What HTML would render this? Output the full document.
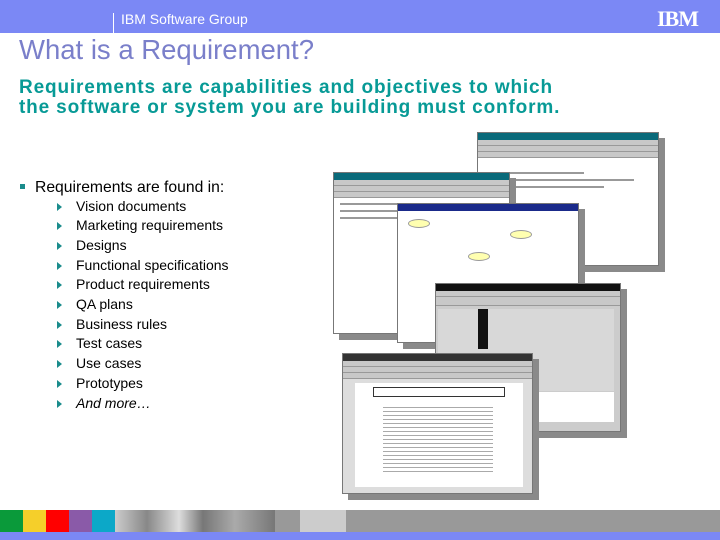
<!DOCTYPE html>
<html><head><style>
*{margin:0;padding:0;box-sizing:border-box}
body{width:720px;height:540px;position:relative;overflow:hidden;background:#fff;font-family:"Liberation Sans",sans-serif}
.a{position:absolute}
.hdr{left:0;top:0;width:720px;height:33px;background:#7b88f5}
.win{position:absolute;background:#fff;border:1px solid #777;box-shadow:6px 6px 0 #8a8a8a}
.tb{height:7px;background:#0a6a7a}
.tb.b{background:#1a2a8a}
.tb.k{background:#111}
.bar{height:6px;background:#c8c8c8;border-bottom:1px solid #999}
.li{position:absolute;left:76px;font-size:14px;color:#000}
.ar{position:absolute;left:57px;width:0;height:0;border-left:5px solid #1a8c8c;border-top:4px solid transparent;border-bottom:4px solid transparent}
.ln{height:2px;background:#999;margin:5px 6px}
</style></head><body>
<div class="a hdr"></div>
<div class="a" style="left:113px;top:13px;width:1px;height:20px;background:#fff"></div>
<div class="a" style="left:121px;top:11px;font-size:14px;color:#fff">IBM Software Group</div>
<div class="a" style="left:657px;top:6px;font-size:22px;font-weight:bold;color:#fff;letter-spacing:-1px;font-family:'Liberation Serif',serif">IBM</div>
<div class="a" style="left:19px;top:34px;font-size:27.5px;color:#7a7fca">What is a Requirement?</div>
<div class="a" style="left:19px;top:78px;font-size:19px;font-weight:bold;color:#079a96;line-height:20px;letter-spacing:0.85px">Requirements are capabilities and objectives to which<br>the software or system you are building must conform.</div>
<div class="a" style="left:20px;top:184px;width:5px;height:5px;background:#1a8c8c"></div>
<div class="a" style="left:35px;top:179px;font-size:15.7px">Requirements are found in:</div>
<div class="ar" style="top:203px"></div><div class="li" style="top:198px">Vision documents</div>
<div class="ar" style="top:222px"></div><div class="li" style="top:217px">Marketing requirements</div>
<div class="ar" style="top:242px"></div><div class="li" style="top:237px">Designs</div>
<div class="ar" style="top:262px"></div><div class="li" style="top:257px">Functional specifications</div>
<div class="ar" style="top:281px"></div><div class="li" style="top:276px">Product requirements</div>
<div class="ar" style="top:301px"></div><div class="li" style="top:296px">QA plans</div>
<div class="ar" style="top:321px"></div><div class="li" style="top:316px">Business rules</div>
<div class="ar" style="top:340px"></div><div class="li" style="top:335px">Test cases</div>
<div class="ar" style="top:360px"></div><div class="li" style="top:355px">Use cases</div>
<div class="ar" style="top:380px"></div><div class="li" style="top:375px">Prototypes</div>
<div class="ar" style="top:400px"></div><div class="li" style="top:395px;font-style:italic">And more…</div>

<div class="win" style="left:477px;top:132px;width:182px;height:134px"><div class="tb"></div><div class="bar"></div><div class="bar"></div><div class="bar"></div><div class="ln" style="margin-top:14px;width:100px"></div><div class="ln" style="width:150px"></div><div class="ln" style="width:120px"></div></div>
<div class="win" style="left:333px;top:172px;width:177px;height:162px"><div class="tb"></div><div class="bar"></div><div class="bar"></div><div class="bar"></div><div class="ln" style="width:80px"></div><div class="ln" style="width:60px"></div><div class="ln" style="width:70px"></div></div>
<div class="win" style="left:397px;top:203px;width:182px;height:140px"><div class="tb b"></div>
<div class="a" style="left:10px;top:15px;width:22px;height:9px;border-radius:50%;background:#ffffb0;border:1px solid #999"></div>
<div class="a" style="left:70px;top:48px;width:22px;height:9px;border-radius:50%;background:#ffffb0;border:1px solid #999"></div>
<div class="a" style="left:112px;top:26px;width:22px;height:9px;border-radius:50%;background:#ffffb0;border:1px solid #999"></div></div>
<div class="win" style="left:435px;top:283px;width:186px;height:149px;background:#ccc"><div class="tb k"></div><div class="bar"></div><div class="bar" style="height:9px"></div><div class="a" style="left:2px;top:25px;width:176px;height:82px;background:#d8d8d8"></div><div class="a" style="left:42px;top:25px;width:10px;height:40px;background:#111"></div><div class="a" style="left:2px;top:108px;width:176px;height:30px;background:#fff"></div></div>
<div class="win" style="left:342px;top:353px;width:191px;height:141px;background:#ddd"><div class="tb k" style="background:#333"></div><div class="bar"></div><div class="bar"></div><div class="bar"></div><div class="a" style="left:12px;top:29px;width:168px;height:104px;background:#fff"></div><div class="a" style="left:30px;top:33px;width:132px;height:10px;border:1px solid #333"></div><div class="a" style="left:40px;top:50px;width:110px;height:70px;background:repeating-linear-gradient(#fff 0 3px,#aaa 3px 4px)"></div></div>

<div class="a" style="left:0;top:510px;width:720px;height:22px;background:#999"></div>
<div class="a" style="left:0;top:510px;width:23px;height:22px;background:#0a9a3a"></div>
<div class="a" style="left:23px;top:510px;width:23px;height:22px;background:#f5cf2a"></div>
<div class="a" style="left:46px;top:510px;width:23px;height:22px;background:#f00"></div>
<div class="a" style="left:69px;top:510px;width:23px;height:22px;background:#8a5aa8"></div>
<div class="a" style="left:92px;top:510px;width:23px;height:22px;background:#0ca8c8"></div>
<div class="a" style="left:115px;top:510px;width:160px;height:22px;background:linear-gradient(90deg,#ccc,#888 20%,#ddd 40%,#777 55%,#aaa 75%,#777)"></div>
<div class="a" style="left:300px;top:510px;width:46px;height:22px;background:#ccc"></div>
<div class="a" style="left:0;top:532px;width:720px;height:8px;background:#7b88f5"></div>
</body></html>
